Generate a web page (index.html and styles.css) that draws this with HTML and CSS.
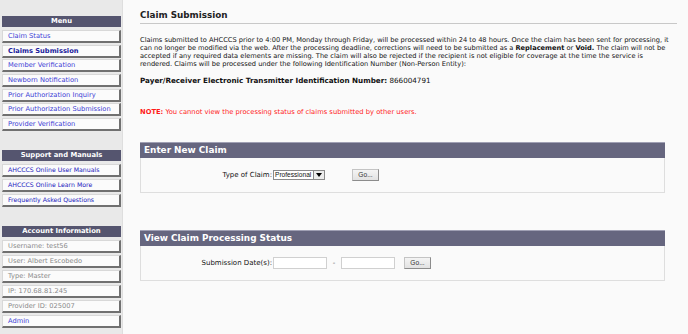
FILE: index.html
```html
<!DOCTYPE html>
<html>
<head>
<meta charset="utf-8">
<link rel="stylesheet" href="styles.css">
</head>
<body>
<div class="page">
  <aside class="sidebar">
    <div class="panel">
      <div class="panel-head">Menu</div>
      <ul class="nav">
        <li><a href="#">Claim Status</a></li>
        <li class="current"><a href="#">Claims Submission</a></li>
        <li><a href="#">Member Verification</a></li>
        <li><a href="#">Newborn Notification</a></li>
        <li><a href="#">Prior Authorization Inquiry</a></li>
        <li><a href="#">Prior Authorization Submission</a></li>
        <li><a href="#">Provider Verification</a></li>
      </ul>
    </div>
    <div class="panel panel-support">
      <div class="panel-head">Support and Manuals</div>
      <ul class="nav nav-small">
        <li><a href="#">AHCCCS Online User Manuals</a></li>
        <li><a href="#">AHCCCS Online Learn More</a></li>
        <li><a href="#">Frequently Asked Questions</a></li>
      </ul>
    </div>
    <div class="panel panel-account">
      <div class="panel-head">Account Information</div>
      <ul class="nav info">
        <li><span>Username: test56</span></li>
        <li><span>User: Albert Escobedo</span></li>
        <li><span>Type: Master</span></li>
        <li><span>IP: 170.68.81.245</span></li>
        <li><span>Provider ID: 025007</span></li>
        <li><a href="#">Admin</a></li>
      </ul>
    </div>
  </aside>
  <main class="content">
    <h1 class="title">Claim Submission</h1>
    <p class="intro">Claims submitted to AHCCCS prior to 4:00 PM, Monday through Friday, will be processed within 24 to 48 hours. Once the claim has been sent for processing, it can no longer be modified via the web. After the processing deadline, corrections will need to be submitted as a <b>Replacement</b> or <b>Void.</b> The claim will not be accepted if any required data elements are missing. The claim will also be rejected if the recipient is not eligible for coverage at the time the service is rendered. Claims will be processed under the following Identification Number (Non-Person Entity):</p>
    <p class="payer"><b>Payer/Receiver Electronic Transmitter Identification Number:</b> 866004791</p>
    <p class="note"><b>NOTE:</b> You cannot view the processing status of claims submitted by other users.</p>

    <section class="box box-new">
      <div class="box-head">Enter New Claim</div>
      <div class="box-body">
        <div class="form-row">
          <label class="lbl">Type of Claim:</label>
          <span class="select"><span class="select-val">Professional</span><span class="select-btn"><svg width="6" height="4" viewBox="0 0 6 4"><path d="M0 0H6L3 4Z" fill="#000"/></svg></span></span>
          <span class="btn btn-go1">Go...</span>
        </div>
      </div>
    </section>

    <section class="box box-view">
      <div class="box-head">View Claim Processing Status</div>
      <div class="box-body">
        <div class="form-row">
          <label class="lbl">Submission Date(s):</label>
          <span class="input"></span>
          <span class="dash">-</span>
          <span class="input"></span>
          <span class="btn btn-go2">Go...</span>
        </div>
      </div>
    </section>
  </main>
</div>
</body>
</html>
```
FILE: styles.css
```css
* { box-sizing: border-box; }
html, body { margin: 0; padding: 0; }
body {
  font-family: "DejaVu Sans", Verdana, sans-serif;
  background: #fafafa;
  width: 688px;
  height: 334px;
  overflow: hidden;
}
.page {
  display: flex;
  height: 334px;
}
.sidebar {
  width: 123px;
  flex: none;
  background: #e9e9e9;
  padding: 16px 2px 0 2px;
  border-right: 1px solid #dedede;
}
.panel-head {
  background: #55556f;
  color: #fff;
  font-weight: bold;
  font-size: 6.8px;
  height: 11px;
  line-height: 11px;
  text-align: center;
  width: 119px;
}
.nav {
  list-style: none;
  margin: 3px 0 0 0;
  padding: 0;
  display: flex;
  flex-direction: column;
  gap: 1.7px;
}
.nav li {
  width: 119px;
  height: 13px;
  background: #fbfbfb;
  border-top: 1px solid #d8d8d8;
  border-left: 1px solid #d8d8d8;
  border-right: 2px solid #707070;
  border-bottom: 2px solid #707070;
  font-size: 6.7px;
  line-height: 10px;
  padding-left: 5px;
  white-space: nowrap;
}
.nav a { color: #3b3bd6; text-decoration: none; }
.nav li.current a { color: #1a1a9c; font-weight: bold; }
.nav-small li { font-size: 6.2px; }
.nav-small a { color: #2020c0; }
.info span { color: #8a8a8a; }
.panel-support { margin-top: 19px; }
.panel-account { margin-top: 19px; }
.info { gap: 2px; }

.content {
  flex: 1;
  padding: 0 11px 0 17px;
}
.title {
  margin: 0;
  padding-top: 10px;
  font-size: 8.8px;
  line-height: 11px;
  font-weight: bold;
  color: #222;
  border-bottom: 1px solid #c8c8c8;
  height: 24px;
}
.intro {
  margin: 12px 0 0 0;
  font-size: 6.65px;
  line-height: 8.1px;
  color: #111;
}
.payer {
  margin: 7.4px 0 0 0;
  font-size: 7.2px;
  line-height: 9px;
  color: #111;
}
.note {
  margin: 23.7px 0 0 0;
  font-size: 6.75px;
  line-height: 9px;
  color: #ff1a1a;
}
.box {
  width: 525px;
  border: 1px solid #dedede;
  border-top: none;
  background: #fafafa;
}
.box-new { margin-top: 24.5px; }
.box-view { margin-top: 37px; }
.box-head {
  background: #66667f;
  color: #fff;
  font-weight: bold;
  font-size: 8.9px;
  height: 16px;
  line-height: 15px;
  padding-left: 4px;
  border-top: 1px solid #a0a0b4;
  margin: 0 -1px;
}
.box-body {
  height: 34px;
  display: flex;
  align-items: center;
}
.form-row {
  display: flex;
  align-items: center;
  font-size: 7px;
  color: #111;
}
.lbl {
  width: 132px;
  text-align: right;
  padding-right: 1px;
}
.select {
  display: flex;
  height: 10px;
  border: 1px solid #8a8a8a;
  background: #fff;
  width: 52px;
}
.select-val {
  flex: 1;
  font-family: "Liberation Sans", Arial, sans-serif;
  font-size: 6.6px;
  line-height: 8px;
  padding-left: 1px;
  overflow: hidden;
  white-space: nowrap;
}
.select-btn {
  width: 11px;
  border-left: 1px solid #8a8a8a;
  background: #ececec;
  display: flex;
  align-items: center;
  justify-content: center;
}
.btn {
  height: 12px;
  width: 27px;
  border: 1px solid #c4c4c4;
  border-right-color: #8c8c8c;
  border-bottom-color: #8c8c8c;
  background: linear-gradient(#f4f4f4, #e2e2e2);
  font-family: "Liberation Sans", Arial, sans-serif;
  font-size: 6.6px;
  line-height: 10px;
  text-align: center;
  color: #333;
}
.btn-go1 { margin-left: 27px; }
.btn-go2 { margin-left: 9px; }
.input {
  width: 54px;
  height: 12px;
  border: 1px solid #d0d0d0;
  background: #fff;
}
.dash { width: 14px; text-align: center; color: #555; }
```
